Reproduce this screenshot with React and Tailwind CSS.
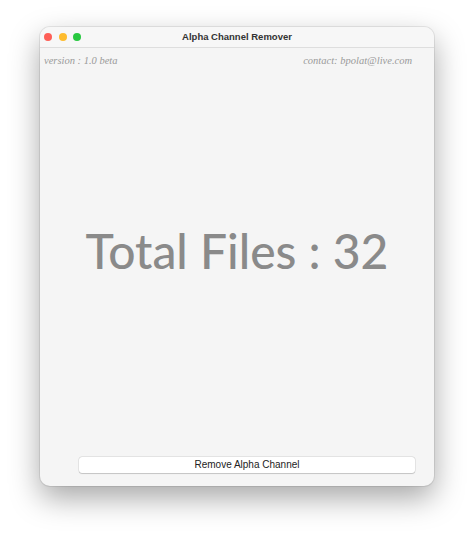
import React from 'react';

const App = () => {
    return (
        <div className="w-[474px] h-[539px] bg-white pt-[27px] pl-[40px]">
            <div className="w-[394px] h-[459px] rounded-[10px] bg-[#f5f5f5] flex flex-col overflow-hidden shadow-[0_12px_30px_rgba(0,0,0,0.35),0_0_0_1px_rgba(0,0,0,0.08)]">
                {/* title bar */}
                <div className="h-[21px] shrink-0 bg-[#f7f7f7] border-b border-[#dedede] flex items-center relative">
                    <div className="flex items-center gap-[6.5px] pl-[4px]">
                        <span className="w-[8px] h-[8px] rounded-full bg-[#fe5f57]"></span>
                        <span className="w-[8px] h-[8px] rounded-full bg-[#febc2e]"></span>
                        <span className="w-[8px] h-[8px] rounded-full bg-[#28c840]"></span>
                    </div>
                    <div className="absolute inset-0 flex items-center justify-center text-[9.5px] font-bold text-[#333] font-['Liberation_Sans',sans-serif]">
                        Alpha Channel Remover
                    </div>
                </div>

                <div className="flex justify-between px-[4px] pt-[8px] text-[10.5px] italic text-[#9a9a9a] font-['Liberation_Serif',serif] leading-none">
                    <span>version : 1.0 beta</span>
                    <span className="pr-[18px]">contact: bpolat@live.com</span>
                </div>

                <div className="flex-1 flex items-center justify-center pb-[22px]">
                    <span className="text-[48px] font-medium text-[#8a8a8a] font-['Lato',sans-serif] leading-none tracking-[0px]">
                        Total Files : 32
                    </span>
                </div>

                <div className="flex pl-[39px] pb-[13px]">
                    <button className="w-[336px] h-[16px] bg-white rounded-[3px] shadow-[0_0_0_0.5px_rgba(0,0,0,0.12),0_0.5px_1px_rgba(0,0,0,0.15)] text-[10px] text-[#222] font-['Liberation_Sans',sans-serif] leading-none">
                        Remove Alpha Channel
                    </button>
                </div>
            </div>
        </div>
    );
};

export default App;
